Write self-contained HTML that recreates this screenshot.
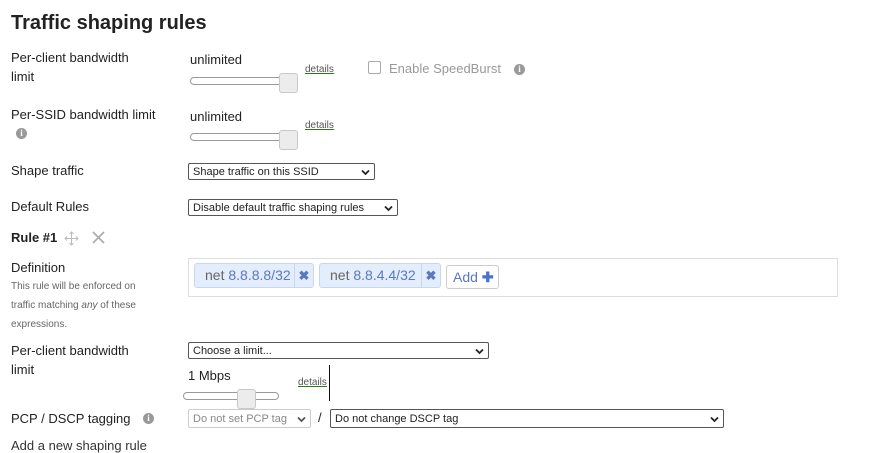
<!DOCTYPE html>
<html><head><meta charset="utf-8"><style>
*{box-sizing:border-box;margin:0;padding:0}
html,body{width:873px;height:442px;overflow:hidden;background:#fff;font-family:"Liberation Sans",sans-serif;color:#222;font-size:13px}
.a{position:absolute;white-space:nowrap}
.lbl{font-size:13px;color:#222;line-height:19px}
.det{font-size:10px;color:#555;text-decoration:underline;text-decoration-color:#2a7a1a}
.track{position:absolute;height:8px;border:1px solid #999;border-radius:4px;background:#fff}
.thumb{position:absolute;width:19px;height:20px;border:1px solid #c8c8c8;border-radius:3px;background:#ececec}
.sel{position:absolute;height:17px;border:1px solid #555;border-radius:2px;font-size:11px;line-height:16px;padding-left:4px;color:#222;background:#fff;overflow:hidden}
.sel svg{position:absolute;right:4px;top:5px}
.info{position:absolute;width:11px;height:11px;border-radius:50%;background:#999;color:#fff;font-size:9px;font-weight:bold;line-height:11px;text-align:center;font-family:"Liberation Serif",serif}
.tag{position:absolute;height:25px;border:1px solid #c6d7f2;background:#e4edfb;border-radius:3px;font-size:14px;line-height:23px;color:#666}
.tag b{font-weight:normal;color:#5a78c0}
.tx{position:absolute;right:0;top:0;width:19px;height:23px;border-left:1px solid #c6d7f2;text-align:center;color:#5a78c0;font-weight:bold;font-size:13px}
.small{font-size:10px;color:#666;line-height:19px}
</style></head><body>
<div class="a" style="left:11px;top:12px;font-size:20px;font-weight:bold;color:#222">Traffic shaping rules</div>

<div class="a lbl" style="left:11px;top:48px">Per-client bandwidth</div>
<div class="a lbl" style="left:11px;top:67px">limit</div>
<div class="a lbl" style="left:190px;top:50px">unlimited</div>
<div class="track" style="left:190px;top:77px;width:96px"></div>
<div class="thumb" style="left:279px;top:73px"></div>
<div class="a det" style="left:305px;top:64px">details</div>
<div class="a" style="left:368px;top:61px;width:13px;height:13px;border:1px solid #aaa;border-radius:2px"></div>
<div class="a" style="left:389px;top:61px;font-size:13px;color:#999">Enable SpeedBurst</div>
<div class="info" style="left:514px;top:64px">i</div>

<div class="a lbl" style="left:11px;top:105px">Per-SSID bandwidth limit</div>
<div class="info" style="left:16px;top:128px">i</div>
<div class="a lbl" style="left:190px;top:107px">unlimited</div>
<div class="track" style="left:190px;top:133px;width:96px"></div>
<div class="thumb" style="left:279px;top:130px"></div>
<div class="a det" style="left:305px;top:120px">details</div>

<div class="a lbl" style="left:11px;top:161px">Shape traffic</div>
<div class="sel" style="left:188px;top:163px;width:187px">Shape traffic on this SSID<svg width="9" height="7" viewBox="0 0 9 7"><path d="M1 1.5l3.5 3.5 3.5-3.5" stroke="#222" stroke-width="1.8" fill="none"/></svg></div>

<div class="a lbl" style="left:11px;top:197px">Default Rules</div>
<div class="sel" style="left:188px;top:199px;width:210px">Disable default traffic shaping rules<svg width="9" height="7" viewBox="0 0 9 7"><path d="M1 1.5l3.5 3.5 3.5-3.5" stroke="#222" stroke-width="1.8" fill="none"/></svg></div>

<div class="a" style="left:11px;top:230px;font-size:13px;font-weight:bold">Rule #1</div>
<svg class="a" style="left:64px;top:231px" width="15" height="15" viewBox="0 0 15 15"><path d="M7.5 1v13M1 7.5h13M5.5 3l2-2 2 2M5.5 12l2 2 2-2M3 5.5l-2 2 2 2M12 5.5l2 2-2 2" stroke="#bbb" stroke-width="1" fill="none"/></svg>
<svg class="a" style="left:92px;top:231px" width="13" height="13" viewBox="0 0 13 13"><path d="M1 1l11 11M12 1L1 12" stroke="#aaa" stroke-width="1.6"/></svg>

<div class="a lbl" style="left:11px;top:258px">Definition</div>
<div class="a small" style="left:11px;top:277px">This rule will be enforced on</div>
<div class="a small" style="left:11px;top:296px">traffic matching <i>any</i> of these</div>
<div class="a small" style="left:11px;top:315px">expressions.</div>
<div class="a" style="left:188px;top:258px;width:650px;height:39px;border:1px solid #ddd"></div>
<div class="tag" style="left:194px;top:263px;width:120px"><span style="padding-left:10px">net <b>8.8.8.8/32</b></span><div class="tx">✖</div></div>
<div class="tag" style="left:319px;top:263px;width:122px"><span style="padding-left:10px">net <b>8.8.4.4/32</b></span><div class="tx">✖</div></div>
<div class="a" style="left:446px;top:265px;width:53px;height:24px;border:1px solid #ccc;border-radius:3px;font-size:14px;line-height:22px;color:#5a78c0;padding-left:6px">Add <b style="color:#4a72d0">✚</b></div>

<div class="a lbl" style="left:11px;top:341px">Per-client bandwidth</div>
<div class="a lbl" style="left:11px;top:360px">limit</div>
<div class="sel" style="left:188px;top:342px;width:301px">Choose a limit...<svg width="9" height="7" viewBox="0 0 9 7"><path d="M1 1.5l3.5 3.5 3.5-3.5" stroke="#222" stroke-width="1.8" fill="none"/></svg></div>
<div class="a lbl" style="left:188px;top:366px">1 Mbps</div>
<div class="track" style="left:183px;top:392px;width:96px"></div>
<div class="thumb" style="left:237px;top:389px"></div>
<div class="a det" style="left:298px;top:377px">details</div>
<div class="a" style="left:329px;top:365px;width:1px;height:36px;background:#111"></div>

<div class="a lbl" style="left:11px;top:409px">PCP / DSCP tagging</div>
<div class="info" style="left:143px;top:413px">i</div>
<div class="sel" style="left:188px;top:409px;width:123px;border-color:#ccc;color:#888;height:19px;line-height:18px">Do not set PCP tag<svg width="9" height="7" viewBox="0 0 9 7" style="top:6px"><path d="M1 1.5l3.5 3.5 3.5-3.5" stroke="#555" stroke-width="1.8" fill="none"/></svg></div>
<div class="a" style="left:318px;top:410px;font-size:13px">/</div>
<div class="sel" style="left:330px;top:409px;width:394px;height:19px;line-height:18px">Do not change DSCP tag<svg width="9" height="7" viewBox="0 0 9 7" style="top:6px"><path d="M1 1.5l3.5 3.5 3.5-3.5" stroke="#222" stroke-width="1.8" fill="none"/></svg></div>

<div class="a" style="left:11px;top:438px;font-size:13px;color:#333">Add a new shaping rule</div>
</body></html>
